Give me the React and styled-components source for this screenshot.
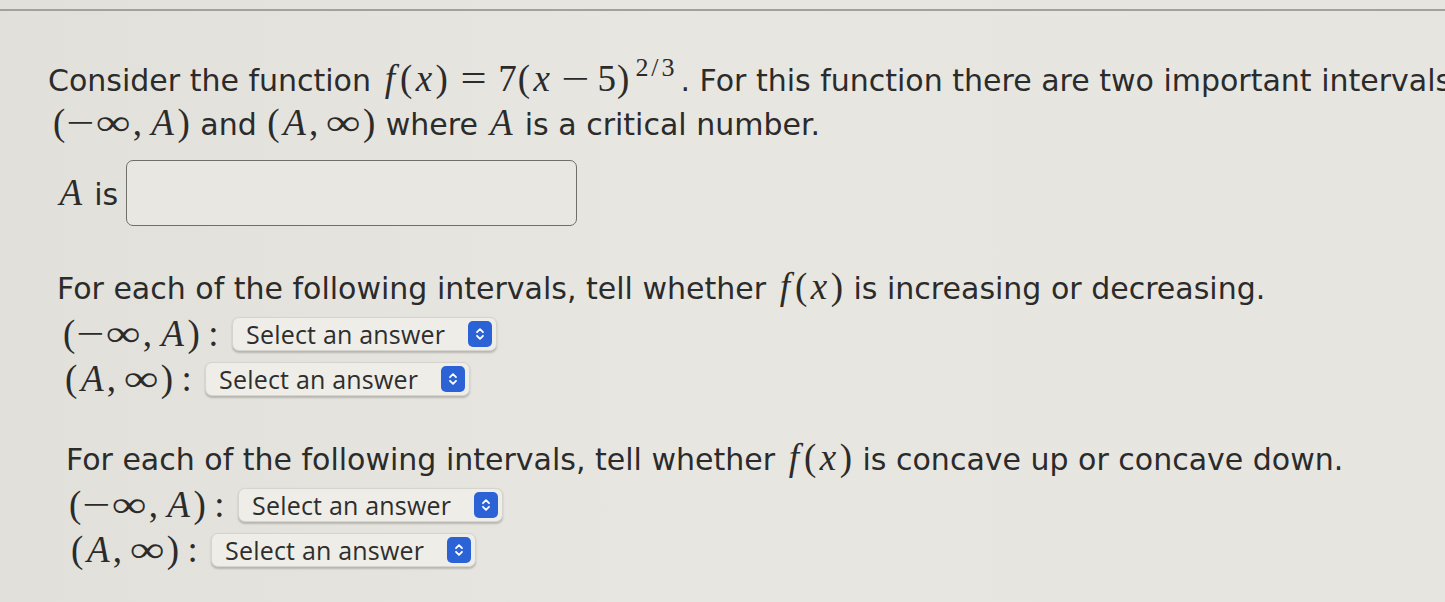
import React from "react"
import styled, { createGlobalStyle } from "styled-components"

const Global = createGlobalStyle`
  html, body {
    margin: 0;
    background: #e6e4de;
  }
  body {
    width: 1445px;
    height: 602px;
    overflow: hidden;
    color: #2b2b2b;
    font-family: "DejaVu Sans", sans-serif;
  }
`

const Page = styled.div`
  width: 1445px;
  height: 602px;
  overflow: hidden;
  background: linear-gradient(90deg, #e2e0da 0%, #e8e6e0 45%, #e7e5df 100%);
`

const Rule = styled.div`
  height: 2px;
  margin-top: 9px;
  background: #a3a19c;
`

const Body = styled.div`
  padding: 48px 0 0 48px;
  white-space: nowrap;
`

const Para = styled.div`
  font-size: 30px;
  line-height: 44px;
  padding-left: ${p => p.$indent || 0}px;
  margin-top: ${p => p.$top || 0}px;
`

// TeX-like math run: each glyph gets the advance width of Computer Modern
const MathRun = styled.span`
  font-family: "Liberation Serif", "DejaVu Serif", serif;
  font-size: ${p => p.$size || 37}px;
  line-height: ${p => (p.$flat ? 0 : 1)};
`

const G = styled.span`
  display: inline-block;
  width: ${p => p.$w}em;
  margin-left: ${p => p.$l || 0}em;
  margin-right: ${p => p.$r || 0}em;
  text-align: center;
  font-style: ${p => (p.$i ? "italic" : "normal")};
`

const Stretch = styled.span`
  display: inline-block;
  transform: scaleX(${p => p.$x});
`

const W = {
  "(": 0.389, ")": 0.389, "=": 0.778, "−": 0.778, "/": 0.5, ",": 0.278, ":": 0.278,
  "2": 0.5, "3": 0.5, "5": 0.5, "7": 0.5, f: 0.5, x: 0.572, A: 0.75, "∞": 1,
}
const SP = { "=": [0.278, 0.278], "−": [0.222, 0.222], ",": [0, 0.167], ":": [0.2, 0] }
const SCALE = { "∞": 1.32, "−": 1.35, "=": 1.25 }

const Tex = ({ s, size, script }) => {
  const chars = [...s]
  return (
    <MathRun $size={size} $flat={script}>
      {chars.map((c, i) => {
        const unary = c === "−" && chars[i - 1] === "("
        const sp = script || unary ? [0, 0] : SP[c] || [0, 0]
        return (
          <G key={i} $w={W[c]} $i={/[a-zA-Z]/.test(c)} $l={sp[0]} $r={sp[1]}>
            {SCALE[c] ? <Stretch $x={SCALE[c]}>{c}</Stretch> : c}
          </G>
        )
      })}
    </MathRun>
  )
}

const Sup = styled.span`
  vertical-align: 15px;
  line-height: 0;
  margin: 0 6px 0 5px;
`

const AnswerRow = styled.div`
  display: flex;
  align-items: center;
  gap: 8px;
  margin-top: 13px;
  padding-left: 9px;
  font-size: 30px;
`

const Field = styled.div`
  width: 449px;
  height: 64px;
  border: 1.5px solid #6f6e6a;
  border-radius: 7px;
  background: #e9e7e2;
`

const Row = styled.div`
  display: flex;
  align-items: center;
  height: 45px;
  padding-left: ${p => p.$indent}px;
`

const Label = styled.span`
  width: ${p => p.$w}px;
  flex: none;
`

const Select = styled.div`
  display: flex;
  align-items: center;
  justify-content: space-between;
  width: 265px;
  height: 34px;
  box-sizing: border-box;
  padding: 0 4px 0 13px;
  border-radius: 7px;
  background: #eeede8;
  border: 1px solid #d6d4ce;
  box-shadow: 0 1.5px 2px rgba(0, 0, 0, 0.2);
  font-family: "Open Sans", "Liberation Sans", sans-serif;
  font-size: 25px;
  letter-spacing: 0.2px;
  color: #2e2e2e;
`

const Stepper = styled.span`
  display: flex;
  align-items: center;
  justify-content: center;
  width: 24px;
  height: 26px;
  border-radius: 5px;
  background: #2b63d6;
`

function Chevrons() {
  return (
    <svg width="12" height="16" viewBox="0 0 12 16" fill="none">
      <path d="M3 6.2 6 3.2 9 6.2M3 9.8 6 12.8 9 9.8" stroke="#fff" strokeWidth="1.8" strokeLinecap="round" strokeLinejoin="round" />
    </svg>
  )
}

const SelectBox = () => (
  <Select>
    <span>Select an answer</span>
    <Stepper>
      <Chevrons />
    </Stepper>
  </Select>
)

const IntervalRow = ({ plus, indent }) => (
  <Row $indent={indent}>
    <Label $w={plus ? 141 : 170}>
      <Tex s={plus ? "(A,∞):" : "(−∞,A):"} />
    </Label>
    <SelectBox />
  </Row>
)

export default function App() {
  return (
    <Page>
      <Global />
      <Rule />
      <Body>
        <Para>
          Consider the function <Tex s="f(x)=7(x−5)" />
          <Sup>
            <Tex s="2/3" size={26} script />
          </Sup>
          . For this function there are two important intervals
        </Para>
        <Para $indent={4}>
          <Tex s="(−∞,A)" /> and <Tex s="(A,∞)" /> where <Tex s="A" /> is a critical number.
        </Para>
        <AnswerRow>
          <span>
            <Tex s="A" /> is
          </span>
          <Field />
        </AnswerRow>
        <Para $indent={9} $top={41}>
          For each of the following intervals, tell whether <Tex s="f(x)" /> is increasing or decreasing.
        </Para>
        <IntervalRow indent={14} />
        <IntervalRow indent={16} plus />
        <Para $indent={18} $top={37}>
          For each of the following intervals, tell whether <Tex s="f(x)" /> is concave up or concave down.
        </Para>
        <IntervalRow indent={20} />
        <IntervalRow indent={22} plus />
      </Body>
    </Page>
  )
}
